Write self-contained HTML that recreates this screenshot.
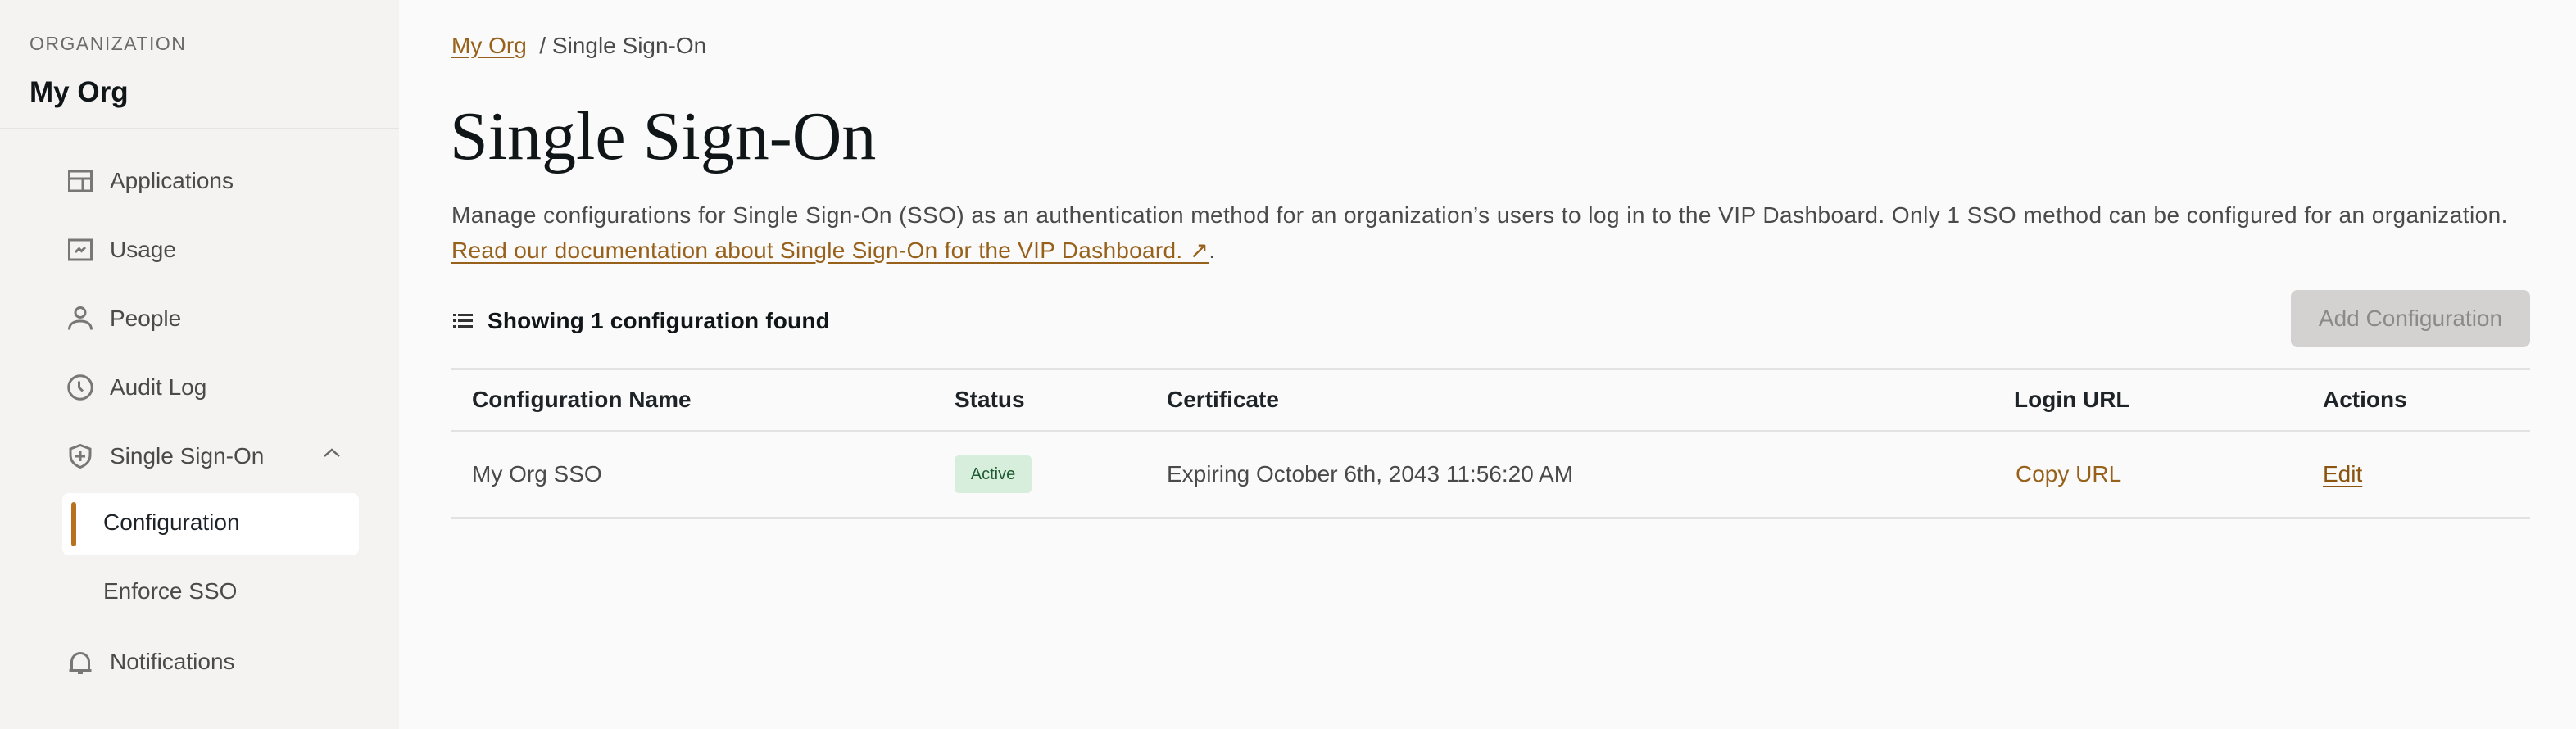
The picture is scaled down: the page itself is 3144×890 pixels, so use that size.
<!DOCTYPE html>
<html><head><meta charset="utf-8"><style>
*{box-sizing:border-box;margin:0;padding:0}
body{width:3144px;height:890px;background:#fafafa;font-family:"Liberation Sans",sans-serif;position:relative;overflow:hidden;color:#1d2327}
.sb{position:absolute;left:0;top:0;width:487px;height:890px;background:#f4f3f2}
.abs{position:absolute;white-space:nowrap}
.nav{position:absolute;left:80px;font-size:28px;color:#4a4a4a;display:flex;align-items:center}
.nav svg{width:36px;height:36px;margin-right:18px}
.th{position:absolute;top:472px;font-size:28px;font-weight:bold;color:#1d2327}
.td{position:absolute;top:563px;font-size:28px;color:#4a4a4a}
.hl{position:absolute;left:551px;width:2537px;height:3px;background:#e2e2e2}
</style></head><body>
<div class="sb">
<div class="abs" style="left:36px;top:40px;font-size:23px;letter-spacing:1.5px;color:#6b6b6b">ORGANIZATION</div>
<div class="abs" style="left:36px;top:93px;font-size:35px;font-weight:bold;color:#101517">My Org</div>
<div style="position:absolute;left:0;top:156px;width:487px;height:2px;background:#e6e4e2"></div>
<div class="nav" style="top:203px"><svg viewBox="0 0 24 24" fill="none" stroke="#777" stroke-width="2"><rect x="3" y="4" width="18" height="16"/><path d="M3 10h18M14 10v10"/></svg>Applications</div>
<div class="nav" style="top:287px"><svg viewBox="0 0 24 24" fill="none" stroke="#777" stroke-width="2"><rect x="3" y="4" width="18" height="16"/><path d="M8 14l3-3 2 2 3-3"/></svg>Usage</div>
<div class="nav" style="top:371px"><svg viewBox="0 0 24 24" fill="none" stroke="#777" stroke-width="2"><circle cx="12" cy="7" r="4"/><path d="M3 21c0-5 4-7 9-7s9 2 9 7"/></svg>People</div>
<div class="nav" style="top:455px"><svg viewBox="0 0 24 24" fill="none" stroke="#777" stroke-width="2"><circle cx="12" cy="12" r="9.5"/><path d="M11 7v5l3 3"/></svg>Audit Log</div>
<div class="nav" style="top:539px"><svg viewBox="0 0 24 24" fill="none" stroke="#777" stroke-width="2"><path d="M12 21c-5-2-8-5-8-10V6l8-3 8 3v5c0 5-3 8-8 10z"/><path d="M12 8v8M8 12h8"/></svg>Single Sign-On</div>
<svg style="position:absolute;left:394px;top:546px" width="22" height="14" viewBox="0 0 22 14" fill="none" stroke="#666" stroke-width="2.5"><path d="M2 11l9-8 9 8"/></svg>
<div style="position:absolute;left:76px;top:602px;width:362px;height:76px;background:#fff;border-radius:8px"></div>
<div style="position:absolute;left:87px;top:613px;width:6px;height:54px;background:#b7721f;border-radius:3px"></div>
<div class="abs" style="left:126px;top:622px;font-size:28px;color:#1d2327">Configuration</div>
<div class="abs" style="left:126px;top:706px;font-size:28px;color:#4a4a4a">Enforce SSO</div>
<div class="nav" style="top:790px"><svg viewBox="0 0 24 24" fill="none" stroke="#777" stroke-width="2"><path d="M5 18V12a7 7 0 0 1 14 0v6M3 19h18M10 21h4"/></svg>Notifications</div>
</div>
<div class="abs" style="left:551px;top:40px;font-size:28px;color:#4a4a4a"><span style="color:#98611b;text-decoration:underline;text-underline-offset:4px">My Org</span> &nbsp;/ Single Sign-On</div>
<div class="abs" style="left:549px;top:118px;font-size:84px;font-family:'Liberation Serif',serif;color:#101517">Single Sign-On</div>
<div class="abs" style="left:551px;top:247px;font-size:28px;color:#4a4a4a;letter-spacing:0.45px">Manage configurations for Single Sign-On (SSO) as an authentication method for an organization’s users to log in to the VIP Dashboard. Only 1 SSO method can be configured for an organization.</div>
<div class="abs" style="left:551px;top:289px;font-size:28px;color:#4a4a4a;letter-spacing:0.3px"><span style="color:#98611b;text-decoration:underline;text-underline-offset:5px">Read our documentation about Single Sign-On for the VIP Dashboard. ↗</span>.</div>
<svg style="position:absolute;left:553px;top:382px" width="24" height="20" viewBox="0 0 24 20" fill="#333"><rect x="0" y="1" width="3" height="3"/><rect x="6" y="1" width="18" height="3"/><rect x="0" y="8" width="3" height="3"/><rect x="6" y="8" width="18" height="3"/><rect x="0" y="15" width="3" height="3"/><rect x="6" y="15" width="18" height="3"/></svg>
<div class="abs" style="left:595px;top:376px;font-size:28px;font-weight:bold;color:#101517;letter-spacing:0.2px">Showing 1 configuration found</div>
<div style="position:absolute;left:2796px;top:354px;width:292px;height:70px;background:#d3d2d0;border-radius:8px;color:#8a8a8a;font-size:28px;text-align:center;line-height:70px">Add Configuration</div>
<div class="hl" style="top:449px"></div>
<div class="th" style="left:576px">Configuration Name</div>
<div class="th" style="left:1165px">Status</div>
<div class="th" style="left:1424px">Certificate</div>
<div class="th" style="left:2458px">Login URL</div>
<div class="th" style="left:2835px">Actions</div>
<div class="hl" style="top:525px"></div>
<div class="td" style="left:576px">My Org SSO</div>
<div style="position:absolute;left:1165px;top:556px;width:94px;height:46px;background:#d8eedd;border-radius:5px;color:#1f5b32;font-size:20px;text-align:center;line-height:46px">Active</div>
<div class="td" style="left:1424px">Expiring October 6th, 2043 11:56:20 AM</div>
<div class="td" style="left:2460px;color:#98611b">Copy URL</div>
<div class="td" style="left:2835px;color:#8a5510;text-decoration:underline;text-underline-offset:5px">Edit</div>
<div class="hl" style="top:631px"></div>
</body></html>
